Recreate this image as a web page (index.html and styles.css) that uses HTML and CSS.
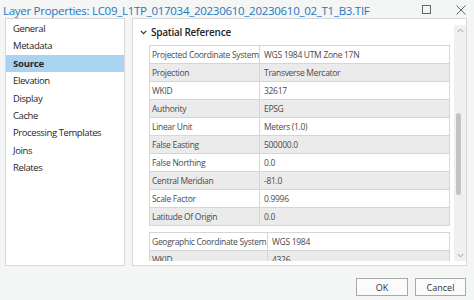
FILE: index.html
```html
<!DOCTYPE html>
<html lang="en">
<head>
    <meta charset="UTF-8">
    <title>Layer Properties</title>
    <link rel="stylesheet" href="styles.css">
</head>
<body>
    <div class="dialog">
        <div class="titlebar">
            <span class="title">Layer Properties: LC09_L1TP_017034_20230610_20230610_02_T1_B3.TIF</span>
            <div class="win-controls">
                <svg width="9" height="9" viewBox="0 0 9 9"><rect x="0.5" y="0.5" width="8" height="8" fill="none" stroke="#666" stroke-width="1"/></svg>
                <svg width="10" height="10" viewBox="0 0 10 10"><path d="M0.5 0.5 L9.5 9.5 M9.5 0.5 L0.5 9.5" stroke="#666" stroke-width="1"/></svg>
            </div>
        </div>

        <div class="main">
            <ul class="nav">
                <li>General</li>
                <li>Metadata</li>
                <li class="active">Source</li>
                <li>Elevation</li>
                <li>Display</li>
                <li>Cache</li>
                <li>Processing Templates</li>
                <li>Joins</li>
                <li>Relates</li>
            </ul>

            <div class="content">
                <div class="scroll-area">
                    <div class="section-head">
                        <svg width="7" height="5" viewBox="0 0 7 5"><path d="M0.8 0.8 L3.5 3.6 L6.2 0.8" fill="none" stroke="#333" stroke-width="1.2"/></svg>
                        <span>Spatial Reference</span>
                    </div>

                    <table class="props">
                        <colgroup><col class="key-col"><col></colgroup>
                        <tr><td>Projected Coordinate System</td><td>WGS 1984 UTM Zone 17N</td></tr>
                        <tr><td>Projection</td><td>Transverse Mercator</td></tr>
                        <tr><td>WKID</td><td>32617</td></tr>
                        <tr><td>Authority</td><td>EPSG</td></tr>
                        <tr><td>Linear Unit</td><td>Meters (1.0)</td></tr>
                        <tr><td>False Easting</td><td>500000.0</td></tr>
                        <tr><td>False Northing</td><td>0.0</td></tr>
                        <tr><td>Central Meridian</td><td>-81.0</td></tr>
                        <tr><td>Scale Factor</td><td>0.9996</td></tr>
                        <tr><td>Latitude Of Origin</td><td>0.0</td></tr>
                    </table>

                    <table class="props geo">
                        <colgroup><col class="key-col"><col></colgroup>
                        <tr><td>Geographic Coordinate System</td><td>WGS 1984</td></tr>
                        <tr><td>WKID</td><td>4326</td></tr>
                    </table>
                </div>

                <div class="scrollbar">
                    <svg width="7" height="5" viewBox="0 0 7 5"><path d="M0.8 4 L3.5 1.2 L6.2 4" fill="none" stroke="#999" stroke-width="1"/></svg>
                    <div class="track"><div class="thumb"></div></div>
                    <svg width="7" height="5" viewBox="0 0 7 5"><path d="M0.8 1 L3.5 3.8 L6.2 1" fill="none" stroke="#999" stroke-width="1"/></svg>
                </div>
            </div>
        </div>

        <div class="footer">
            <button>OK</button>
            <button>Cancel</button>
        </div>
    </div>
</body>
</html>
```

FILE: styles.css
```css
body {
    margin: 0;
    background: #f4f5f5;
    font-family: "Open Sans", "Noto Sans", sans-serif;
    color: #333;
}
.dialog {
    width: 474px;
    height: 300px;
    overflow: hidden;
}
.titlebar {
    height: 18px;
    display: flex;
    align-items: center;
    padding: 0 8px 0 3px;
}
.title {
    flex: 1;
    color: #2677c0;
    font-size: 11.5px;
    letter-spacing: -0.28px;
    white-space: nowrap;
    margin-top: 2px;
}
.win-controls {
    display: flex;
    gap: 25px;
    align-items: center;
    margin-top: 1px;
}
.main {
    display: flex;
    gap: 7px;
    padding: 0 7px 0 5px;
    height: 248px;
}
.nav {
    list-style: none;
    margin: 0;
    padding: 1px 0 0;
    width: 118px;
    background: white;
    border: 1px solid #d8d8d8;
}
.nav li {
    height: 17.4px;
    line-height: 17.4px;
    padding-left: 7px;
    font-size: 9.5px;
    letter-spacing: -0.4px;
    color: #262626;
    white-space: nowrap;
}
.nav li.active {
    background: #a8d3f1;
    font-weight: 700;
    letter-spacing: -0.2px;
}
.content {
    flex: 1;
    display: flex;
    background: white;
    border: 1px solid #d8d8d8;
    padding-bottom: 4px;
}
.scroll-area {
    flex: 1;
    overflow: hidden;
    padding-left: 16px;
}
.section-head {
    display: flex;
    align-items: center;
    gap: 4px;
    height: 26px;
    margin-left: -9px;
    font-size: 10px;
    font-weight: 600;
    letter-spacing: -0.25px;
    color: #262626;
}
.props {
    border-collapse: collapse;
    table-layout: fixed;
    width: 301px;
    font-size: 8.5px;
    letter-spacing: -0.3px;
    color: #4a4a4a;
}
.props td {
    height: 17px;
    padding: 0 0 0 4px;
    border: 1px solid #d6d6d6;
    white-space: nowrap;
    overflow: hidden;
}
.props td:first-child {
    padding-left: 2px;
}
.key-col {
    width: 110px;
}
.props tr:nth-child(even) td {
    background: #ebebeb;
}
.geo {
    margin-top: 6px;
}
.geo .key-col {
    width: 118px;
}
.scrollbar {
    width: 12px;
    margin-top: 6px;
    background: #f0f0f0;
    display: flex;
    flex-direction: column;
    align-items: center;
    padding: 3px 0;
}
.track {
    flex: 1;
    width: 100%;
    padding-top: 80px;
}
.thumb {
    width: 5px;
    height: 82px;
    margin-left: 2px;
    background: #c3c3c3;
    border-radius: 3px;
}
.footer {
    display: flex;
    justify-content: flex-end;
    gap: 7px;
    padding: 12px 8px 0;
}
button {
    height: 18px;
    padding: 0;
    border: 1px solid #a9a9a9;
    background: #fbfbfb;
    font-family: inherit;
    font-size: 9px;
    color: #333;
}
button:first-child {
    width: 52px;
}
button:last-child {
    width: 51px;
}
```
